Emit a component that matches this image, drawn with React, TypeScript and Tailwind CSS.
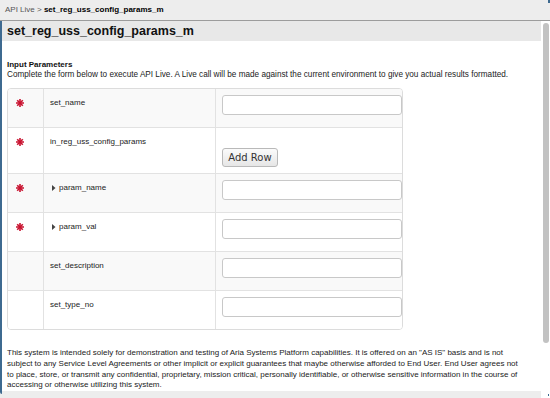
import React from "react";

const Star = () => (
  <svg width="8" height="8" viewBox="0 0 10 10" className="block">
    <g stroke="#c8102e" strokeWidth="2">
      <line x1="5" y1="0" x2="5" y2="10" />
      <line x1="0" y1="5" x2="10" y2="5" />
      <line x1="1.5" y1="1.5" x2="8.5" y2="8.5" />
      <line x1="8.5" y1="1.5" x2="1.5" y2="8.5" />
    </g>
  </svg>
);

type Row = { req: boolean; label: string; tri?: boolean; kind: "input" | "button" };

const rows: Row[] = [
  { req: true, label: "set_name", kind: "input" },
  { req: true, label: "in_reg_uss_config_params", kind: "button" },
  { req: true, label: "param_name", tri: true, kind: "input" },
  { req: true, label: "param_val", tri: true, kind: "input" },
  { req: false, label: "set_description", kind: "input" },
  { req: false, label: "set_type_no", kind: "input" },
];

export default function App() {
  return (
    <div
      className="w-[550px] h-[398px] bg-[#ededed] flex flex-col overflow-hidden relative text-[#222]"
      style={{ fontFamily: '"Liberation Sans", Arial, sans-serif' }}
    >
      <div className="absolute right-0 top-0 w-[2px] h-[3px] bg-[#3e6a90]" />
      <div className="absolute right-[1px] bottom-[2px] w-[1px] h-[2px] bg-[#3e6a90]" />
      {/* breadcrumb */}
      <div className="h-[21px] shrink-0 border-b border-[#9c9c9c] flex items-center pl-[5px] text-[8px] leading-[10px]">
        <span className="text-[#555]">API Live &gt;&nbsp;</span>
        <span className="font-bold text-black">set_reg_uss_config_params_m</span>
      </div>
      <div className="flex flex-1 min-h-0">
        <div className="w-[2px] bg-[#3e6a90] rounded-bl-[4px] mb-[4px]" />
        <div className="flex-1 flex flex-col min-w-0">
          <div className="h-[20px] shrink-0 bg-[#e8e8e8] flex items-center pl-[5px]">
            <span className="font-bold text-[12.5px] leading-[14px] text-[#111]">set_reg_uss_config_params_m</span>
          </div>
          <div className="bg-white h-[350px] pl-[5px] pt-[19px]">
            <div className="text-[8px] leading-[10px] font-bold text-[#111]">Input Parameters</div>
            <div className="text-[8.2px] leading-[10px] text-[#222]">
              Complete the form below to execute API Live. A Live call will be made against the current environment to give you actual results formatted.
            </div>
            <div className="mt-[8px] w-[396px] border border-[#dcdcdc] rounded-[4px] overflow-hidden">
              {rows.map((r, i) => (
                <div
                  key={r.label}
                  className={`grid grid-cols-[35px_172px_1fr] ${i > 0 ? "border-t border-[#e2e2e2]" : ""} ${i % 2 === 0 ? "bg-[#f9f9f9]" : "bg-white"}`}
                >
                  <div className="pl-[8px] pt-[10px]">{r.req && <Star />}</div>
                  <div className="border-l border-[#e2e2e2] pl-[6px] pt-[9px] text-[8px] leading-[10px] text-[#222] flex items-start">
                    {r.tri && (
                      <svg width="4" height="6" viewBox="0 0 4 6" className="mt-[2px] ml-[2px] mr-[3px] shrink-0">
                        <path d="M0 0 L3.5 3 L0 6 Z" fill="#444" />
                      </svg>
                    )}
                    <span>{r.label}</span>
                  </div>
                  <div className="border-l border-[#e2e2e2] pl-[6px] pr-[2px]">
                    {r.kind === "input" ? (
                      <div className="pt-[6px] pb-[12px]">
                        <div className="h-[20px] w-[180px] bg-white border border-[#c8c8c8] rounded-[3px]" />
                      </div>
                    ) : (
                      <div className="pt-[20px] pb-[6px]">
                        <button
                          className="h-[19px] w-[56px] rounded-[3px] border border-[#b9b9b9] bg-gradient-to-b from-[#fbfbfb] to-[#e6e6e6] text-[10px] leading-[10px] text-[#333] flex items-center justify-center"
                          style={{ fontFamily: '"DejaVu Sans", Verdana, sans-serif' }}
                        >
                          Add Row
                        </button>
                      </div>
                    )}
                  </div>
                </div>
              ))}
            </div>
            <div className="mt-[18px] text-[8px] leading-[10.8px] text-[#222]">
              This system is intended solely for demonstration and testing of Aria Systems Platform capabilities. It is offered on an "AS IS" basis and is not
              <br />
              subject to any Service Level Agreements or other implicit or explicit guarantees that maybe otherwise afforded to End User. End User agrees not
              <br />
              to place, store, or transmit any confidential, proprietary, mission critical, personally identifiable, or otherwise sensitive information in the course of
              <br />
              accessing or otherwise utilizing this system.
            </div>
          </div>
        </div>
        <div className="w-[9px] shrink-0 bg-white pl-[2px] pt-[2px]">
          <div className="w-[6px] h-[320px] rounded-full bg-[#c2c2c2]" />
        </div>
      </div>
    </div>
  );
}
